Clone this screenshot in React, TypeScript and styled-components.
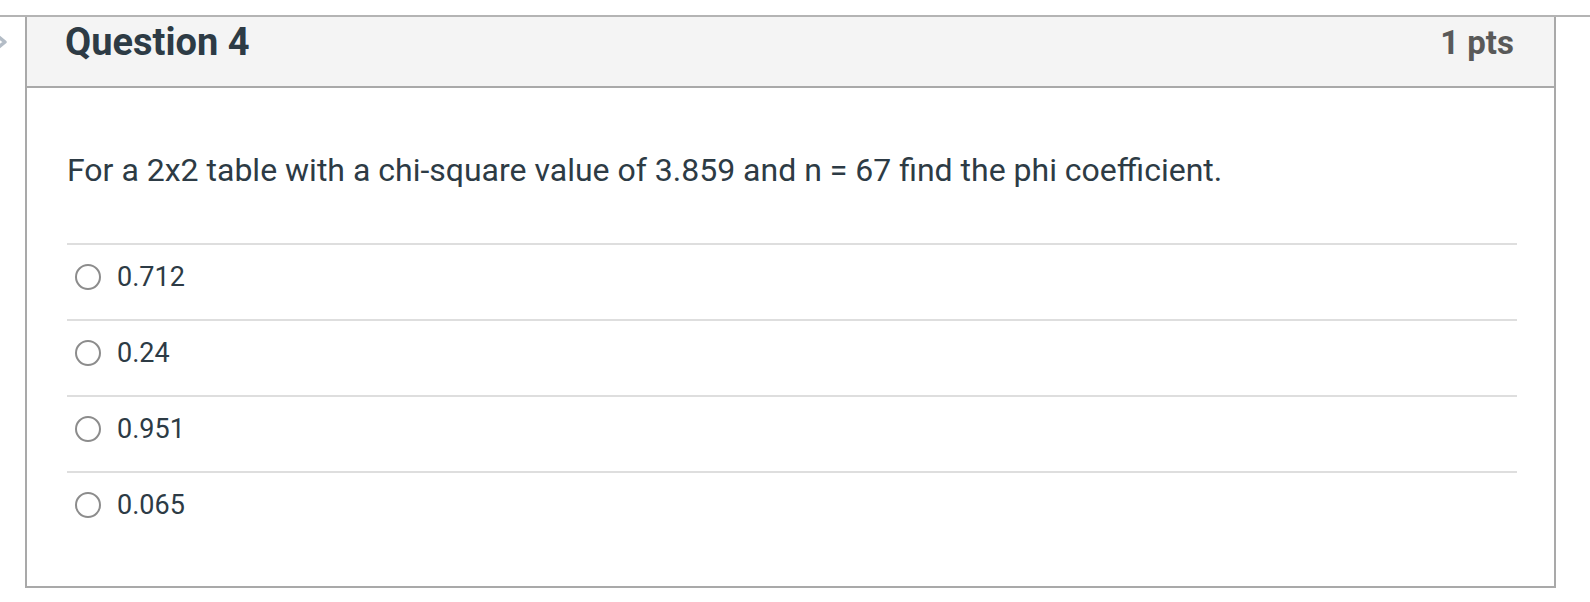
import styled, { createGlobalStyle } from 'styled-components';

const GlobalStyle = createGlobalStyle`
  html, body {
    margin: 0;
    padding: 0;
    background: #ffffff;
  }
  body {
    font-family: Roboto, "Liberation Sans", Arial, sans-serif;
    color: #2d3b45;
  }
`;

const Page = styled.div`
  position: relative;
  padding-top: 15px;
  width: 1590px;
  height: 602px;
  box-sizing: border-box;
  overflow: hidden;
`;

const TopRule = styled.div`
  border-top: 2px solid #b4b4b4;
`;

const FlagMarker = styled.div`
  position: absolute;
  left: -10px;
  top: 31px;
  width: 18px;
  height: 22px;
  color: #b3bcc6;
`;

const QuestionBox = styled.div`
  margin-left: 25px;
  width: 1531px;
  border: 2px solid #a9a9a9;
  border-top: none;
  box-sizing: border-box;
`;

const Header = styled.div`
  display: flex;
  justify-content: space-between;
  align-items: flex-start;
  height: 71px;
  box-sizing: border-box;
  padding: 3px 40px 0 38px;
  background: #f4f4f4;
  border-bottom: 2px solid #a9a9a9;
`;

const QuestionName = styled.h2`
  margin: 0;
  font-size: 38px;
  line-height: 44px;
  font-weight: 700;
  color: #2d3b45;
`;

const Points = styled.span`
  font-size: 33px;
  line-height: 44px;
  font-weight: 700;
  color: #595959;
  margin-top: 1px;
`;

const Content = styled.div`
  padding: 60px 37px 39px 40px;
`;

const QuestionText = styled.p`
  margin: 0 0 51px;
  font-size: 32px;
  line-height: 44px;
  color: #2d3b45;
`;

const AnswerList = styled.div`
  display: flex;
  flex-direction: column;
`;

const AnswerRow = styled.label`
  display: flex;
  align-items: center;
  gap: 16px;
  height: 76px;
  box-sizing: border-box;
  padding: 0 0 11px 8px;
  border-top: 2px solid #dedede;
  cursor: pointer;
`;

const Radio = styled.span`
  width: 26px;
  height: 26px;
  box-sizing: border-box;
  border: 2.5px solid #8c8c8c;
  border-radius: 50%;
  flex-shrink: 0;
`;

const AnswerText = styled.span`
  font-size: 27px;
  color: #2d3b45;
`;

const answers = ['0.712', '0.24', '0.951', '0.065'];

export default function App() {
  return (
    <>
      <GlobalStyle />
      <Page>
        <FlagMarker>
          <svg width="18" height="22" viewBox="0 0 18 22" fill="none">
            <path d="M4 2 L15 11 L4 20" stroke="currentColor" strokeWidth="3.5" strokeLinejoin="round" />
          </svg>
        </FlagMarker>
        <TopRule />
        <QuestionBox>
          <Header>
            <QuestionName>Question 4</QuestionName>
            <Points>1 pts</Points>
          </Header>
          <Content>
            <QuestionText>
              For a 2x2 table with a chi-square value of 3.859 and n = 67 find the phi coefficient.
            </QuestionText>
            <AnswerList>
              {answers.map((a) => (
                <AnswerRow key={a}>
                  <Radio />
                  <AnswerText>{a}</AnswerText>
                </AnswerRow>
              ))}
            </AnswerList>
          </Content>
        </QuestionBox>
      </Page>
    </>
  );
}
